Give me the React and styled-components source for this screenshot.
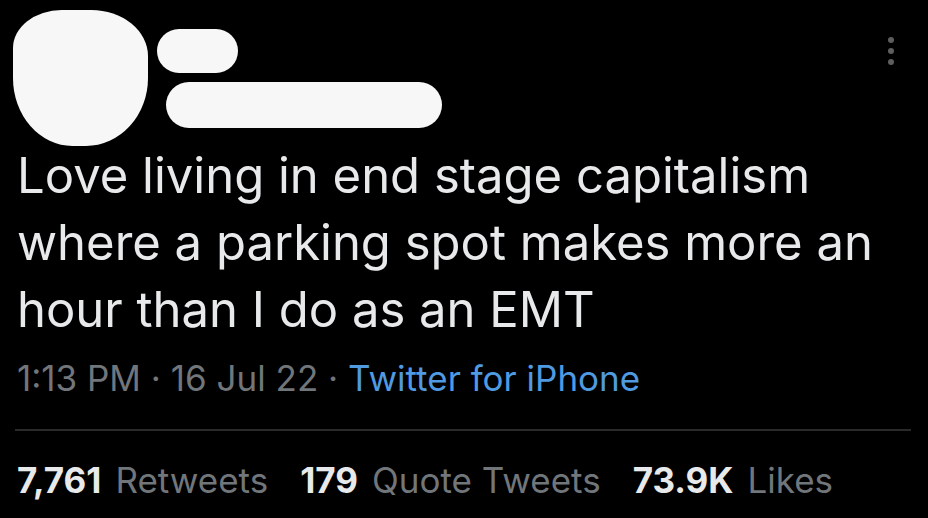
import React from "react";
import styled, { createGlobalStyle } from "styled-components";

const Global = createGlobalStyle`
  html, body { margin: 0; padding: 0; background: #000; }
  body { width: 928px; height: 518px; overflow: hidden; font-family: Inter, "Noto Sans", sans-serif; }
`;

const Page = styled.div`
  width: 928px;
  height: 518px;
  background: #000;
  box-sizing: border-box;
  padding: 0 18px 0 17px;
  display: flex;
  flex-direction: column;
`;

const Header = styled.div`
  position: relative;
  display: flex;
  height: 140px;
  margin-left: -4px;
`;

const Avatar = styled.div`
  flex: none;
  width: 135px;
  height: 136px;
  margin-top: 10px;
  background: #f7f7f7;
  border-radius: 36% 42% 46% 44% / 28% 34% 50% 50%;
`;

const Names = styled.div`
  display: flex;
  flex-direction: column;
  gap: 9px;
  margin-left: 9px;
  padding-top: 29px;
`;

const Pill = styled.div`
  height: ${(p) => p.$h}px;
  width: ${(p) => p.$w}px;
  margin-left: ${(p) => p.$ml || 0}px;
  background: #f7f7f7;
  border-radius: 999px;
`;

const More = styled.div`
  position: absolute;
  right: 16px;
  top: 37px;
  display: flex;
  flex-direction: column;
  gap: 5px;
`;

const Dot = styled.span`
  width: 6px;
  height: 6px;
  border-radius: 50%;
  background: #5e5e5e;
`;

const Body = styled.p`
  margin: 2px 0 0;
  color: #e7e9ea;
  font-size: 49px;
  line-height: 67px;
  letter-spacing: 0;
`;

const Meta = styled.div`
  margin-top: 15px;
  color: #71767b;
  font-size: 35px;
  line-height: 40px;
`;

const Source = styled.span`
  color: #4f9ae0;
`;

const Divider = styled.hr`
  margin: 31px -1px 0 -2px;
  border: 0;
  border-top: 2px solid #2a2a2a;
`;

const Stats = styled.div`
  margin-top: 27px;
  display: flex;
  gap: 32px;
  font-size: 35px;
  line-height: 44px;
  color: #71767b;
`;

const Num = styled.b`
  color: #e7e9ea;
  font-weight: 700;
  margin-right: 14px;
`;

export default function App() {
  return (
    <>
      <Global />
      <Page>
        <Header>
          <Avatar />
          <Names>
            <Pill $w={81} $h={44} />
            <Pill $w={276} $h={46} $ml={9} />
          </Names>
          <More>
            <Dot />
            <Dot />
            <Dot />
          </More>
        </Header>
        <Body>
          Love living in end stage capitalism
          <br />
          where a parking spot makes more an
          <br />
          hour than I do as an EMT
        </Body>
        <Meta>
          1:13 PM · 16 Jul 22 · <Source>Twitter for iPhone</Source>
        </Meta>
        <Divider />
        <Stats>
          <span><Num>7,761</Num>Retweets</span>
          <span><Num>179</Num>Quote Tweets</span>
          <span><Num>73.9K</Num>Likes</span>
        </Stats>
      </Page>
    </>
  );
}
